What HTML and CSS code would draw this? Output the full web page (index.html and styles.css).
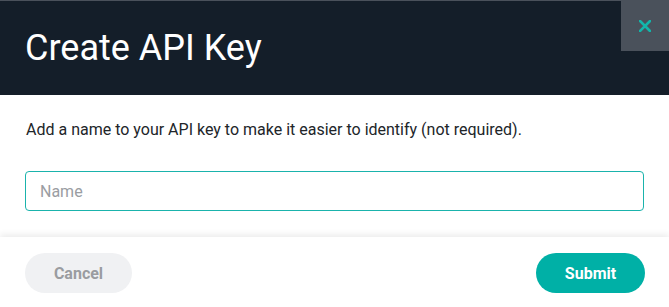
FILE: index.html
```html
<!DOCTYPE html>
<html lang="en">
<head>
    <meta charset="UTF-8">
    <meta name="viewport" content="width=device-width, initial-scale=1.0">
    <title>Create API Key</title>
    <link rel="stylesheet" href="styles.css">
</head>
<body>

    <div class="modal">
        <div class="modal-header">
            <h1>Create API Key</h1>
            <button type="button" class="close" aria-label="Close">
                <svg width="12" height="12" viewBox="0 0 12 12">
                    <path d="M1 1L11 11M11 1L1 11" stroke="#13b5aa" stroke-width="2.6" stroke-linecap="square"/>
                </svg>
            </button>
        </div>

        <div class="modal-body">
            <p>Add a name to your API key to make it easier to identify (not required).</p>
            <input type="text" class="name" placeholder="Name">
        </div>

        <div class="modal-footer">
            <button type="button" class="btn cancel">Cancel</button>
            <button type="button" class="btn submit">Submit</button>
        </div>
    </div>

</body>
</html>
```

FILE: styles.css
```css
body {
    font-family: Roboto, 'Liberation Sans', Arial, sans-serif;
    margin: 0;
    padding: 0;
    background-color: #fff;
}

.modal {
    width: 669px;
    height: 307px;
    display: flex;
    flex-direction: column;
    overflow: hidden;
}

.modal-header {
    background-color: #141e29;
    border-top: 1px solid #4a515b;
    height: 94px;
    display: flex;
    justify-content: space-between;
    align-items: flex-start;
}

.modal-header h1 {
    margin: 0;
    padding: 25px 0 0 25px;
    font-size: 36px;
    font-weight: 400;
    line-height: 44px;
    color: #fff;
}

.close {
    width: 48px;
    height: 50px;
    border: none;
    padding: 0;
    background-color: #4a515b;
    display: flex;
    justify-content: center;
    align-items: center;
    cursor: pointer;
}

.modal-body {
    padding: 25px 25px 22px 25px;
    height: 95px;
}

.modal-body p {
    margin: 0 0 31px 1px;
    font-size: 16px;
    line-height: 20px;
    color: #212529;
}

input.name {
    box-sizing: border-box;
    width: 619px;
    height: 40px;
    padding: 0 14px;
    border: 1px solid #1ab3ac;
    border-radius: 4px;
    font-family: inherit;
    font-size: 16px;
    color: #333;
    outline: none;
}

input.name::placeholder {
    color: #9a9da2;
}

.modal-footer {
    flex: 1;
    display: flex;
    justify-content: space-between;
    align-items: flex-start;
    padding: 16px 24px 0 25px;
    box-shadow: 0 -3px 6px rgba(0, 0, 0, 0.07);
    position: relative;
}

.btn {
    height: 40px;
    border: none;
    border-radius: 20px;
    font-family: inherit;
    font-size: 16px;
    font-weight: 700;
    cursor: pointer;
}

.cancel {
    width: 107px;
    background-color: #f0f1f3;
    color: #9a9ca0;
}

.submit {
    width: 109px;
    background-color: #00b0a6;
    color: #fff;
}
```
